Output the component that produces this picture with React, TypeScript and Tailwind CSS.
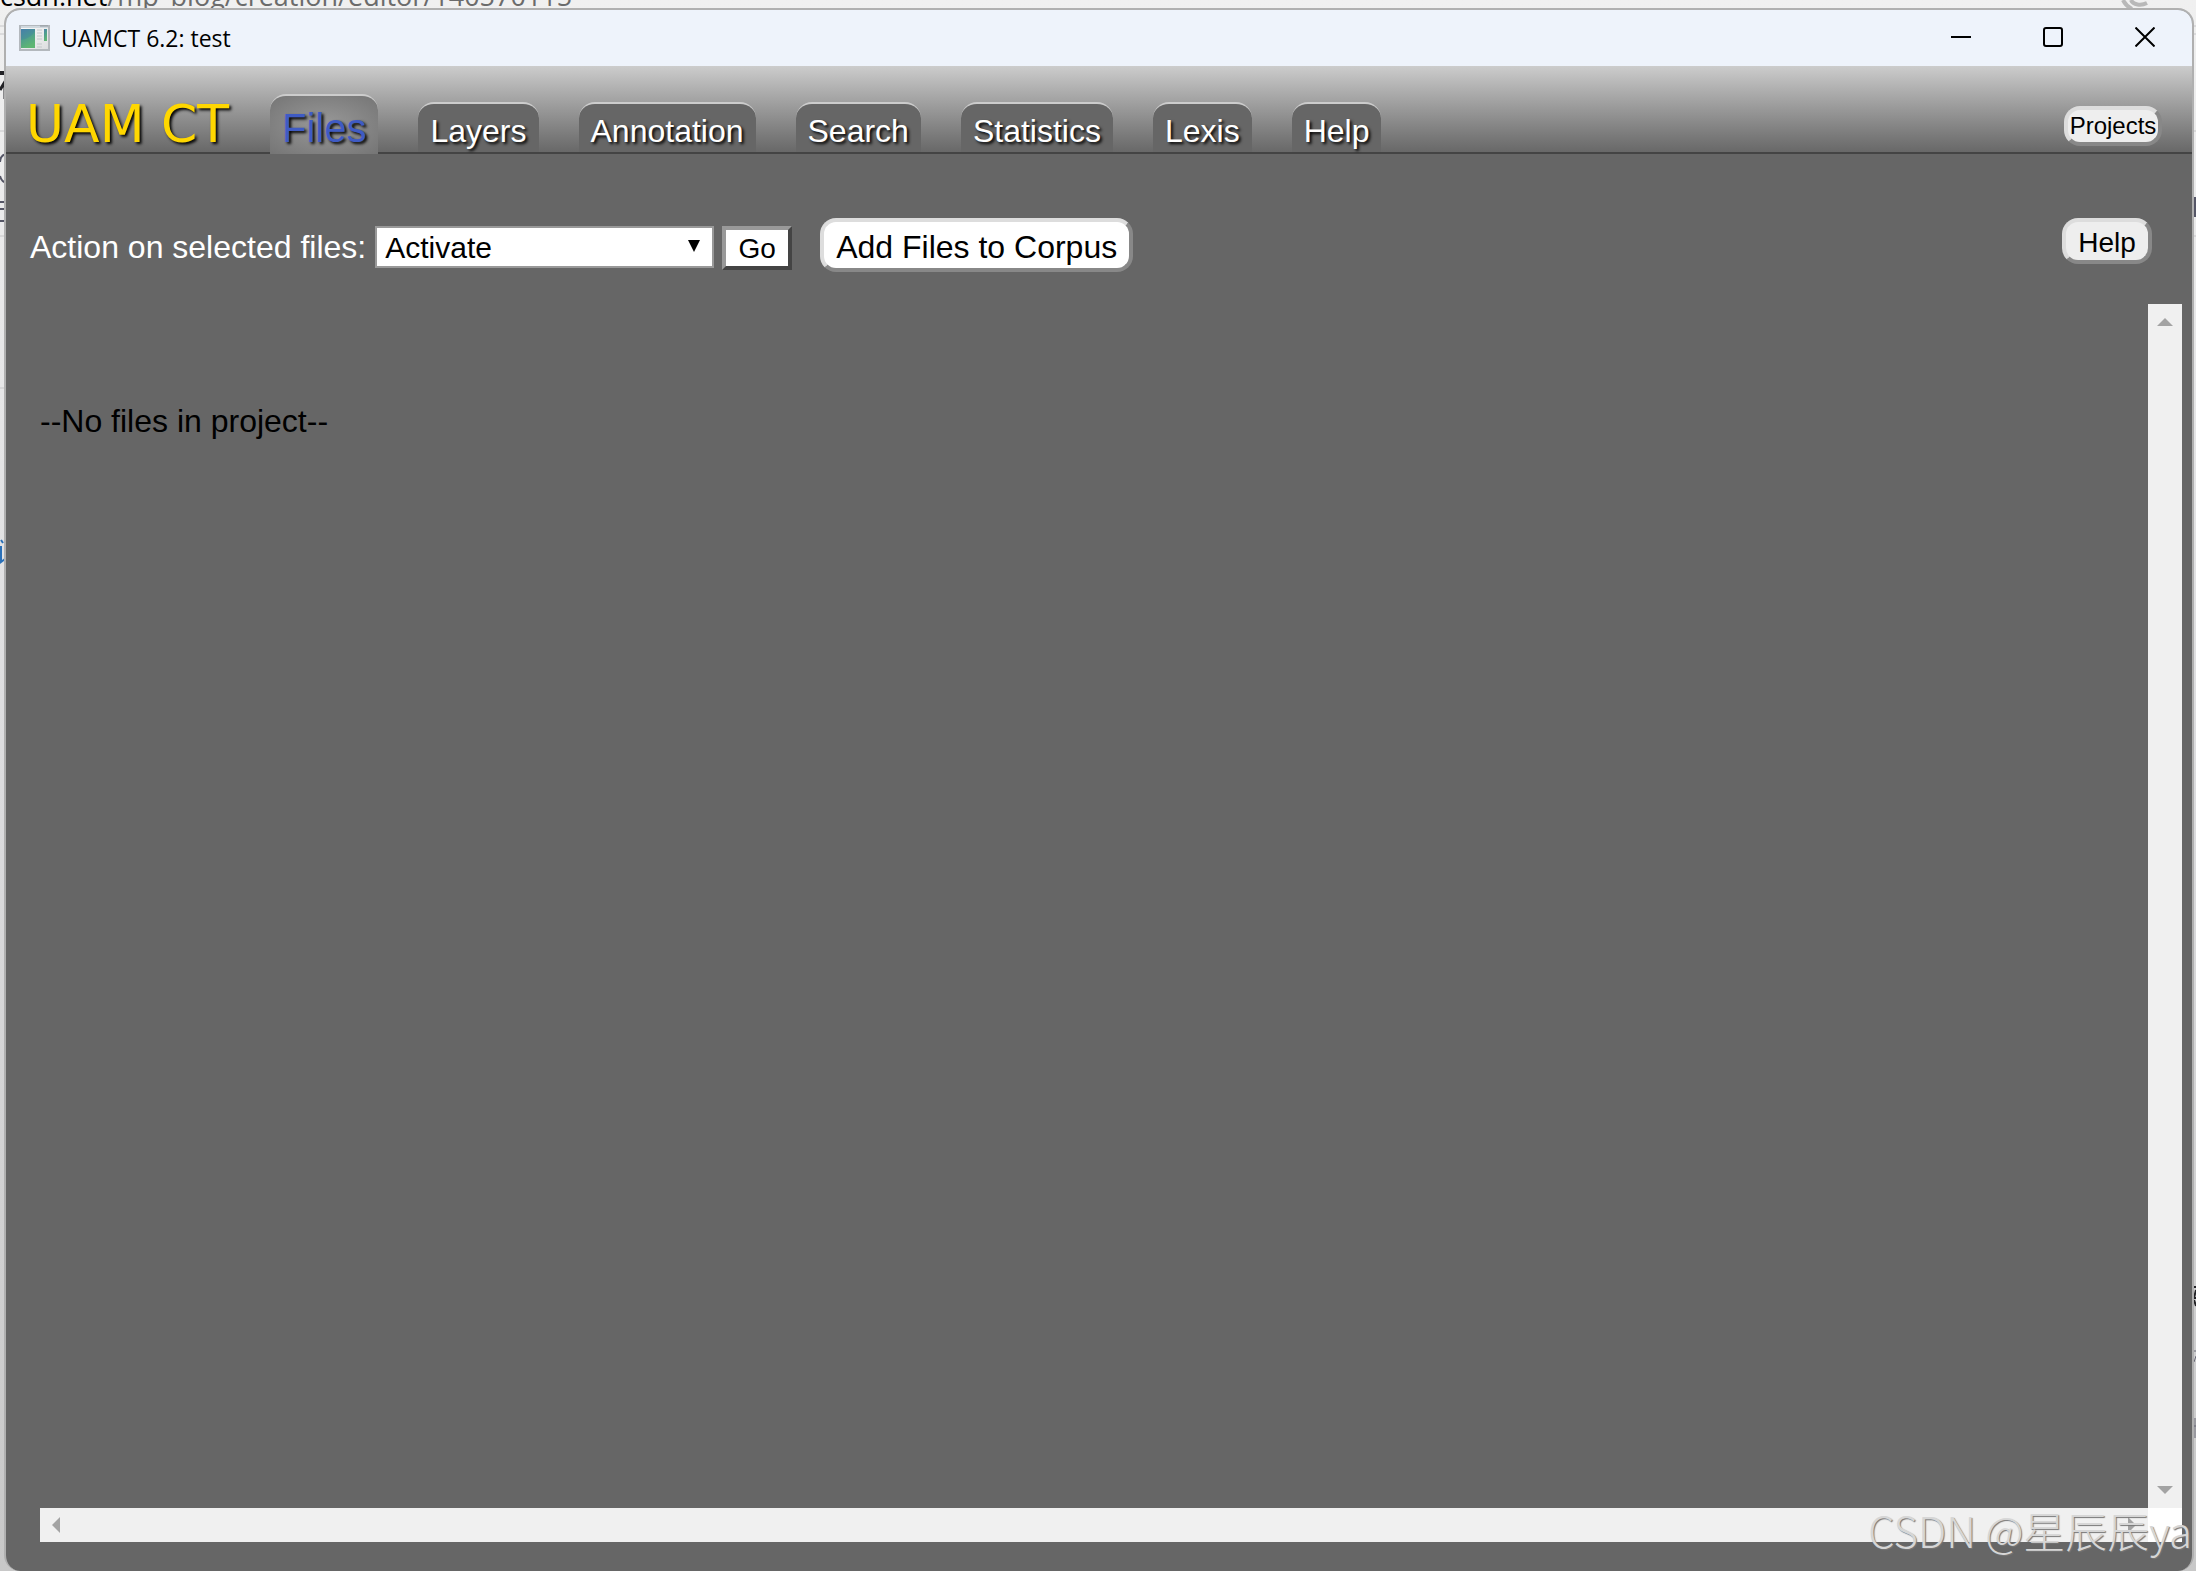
import { useState } from "react";

const tabs = ["Files", "Layers", "Annotation", "Search", "Statistics", "Lexis", "Help"];

const outset =
  "border-4 border-t-[#dddddd] border-l-[#dddddd] border-r-[#888888] border-b-[#888888] rounded-2xl text-black whitespace-nowrap";

const AppIcon = () => (
  <svg width="31" height="26" viewBox="0 0 31 26" aria-hidden="true">
    <defs>
      <linearGradient id="pane" x1="0" y1="0" x2="0.4" y2="1">
        <stop offset="0" stopColor="#4a80ac" />
        <stop offset="0.5" stopColor="#4f9f8c" />
        <stop offset="1" stopColor="#5fb673" />
      </linearGradient>
      <linearGradient id="frame" x1="0" y1="0" x2="1" y2="1">
        <stop offset="0" stopColor="#fbfbfb" />
        <stop offset="1" stopColor="#dcdddf" />
      </linearGradient>
    </defs>
    <rect x="1" y="1" width="29" height="24" fill="url(#frame)" stroke="#b3b8bd" strokeWidth="2" />
    <path d="M2 2h27" stroke="#d0d8de" strokeWidth="2" />
    <path d="M21 1h8" stroke="#8e969d" strokeWidth="1" />
    <rect x="2" y="4" width="14" height="19" fill="url(#pane)" />
    <path d="M2 15c6-1 11-4 14-9v-2H2z" fill="#3f7fa5" opacity="0.35" />
    <path d="M18 5h5M18 8h5M18 11h5M18 14h5M18 19h5M18 22h5" stroke="#c4c8cb" strokeWidth="1" />
    <rect x="25" y="4" width="3" height="12" fill="url(#pane)" />
  </svg>
);

const TitleBar = () => (
  <div className="h-14 shrink-0 bg-[#eef3fb] flex items-center justify-between pl-[13px] pr-[37px]">
    <div className="flex items-center gap-[11px]">
      <AppIcon />
      <span className="font-['Open_Sans','Noto_Sans',sans-serif] text-[23px] leading-8 text-black">
        UAMCT 6.2: test
      </span>
    </div>
    <div className="flex items-center gap-[72px] pb-0.5 text-black">
      <button aria-label="Minimize">
        <svg width="20" height="20" viewBox="0 0 20 20">
          <path d="M0 10h20" stroke="currentColor" strokeWidth="2" />
        </svg>
      </button>
      <button aria-label="Maximize">
        <svg width="20" height="20" viewBox="0 0 20 20">
          <rect x="1" y="1" width="18" height="18" rx="2" fill="none" stroke="currentColor" strokeWidth="2" />
        </svg>
      </button>
      <button aria-label="Close">
        <svg width="20" height="20" viewBox="0 0 20 20">
          <path d="M0.5 0.5l19 19M19.5 0.5l-19 19" stroke="currentColor" strokeWidth="2" />
        </svg>
      </button>
    </div>
  </div>
);

const Header = () => {
  const [active, setActive] = useState("Files");

  return (
    <div className="h-[88px] shrink-0 flex items-end justify-between bg-linear-to-b from-[#cccccc] to-[#666666] shadow-[inset_0_-2px_0_#444444] pl-5 pr-[30px]">
      <div className="flex items-end">
        <h1 className="w-[244px] font-['DejaVu_Sans',sans-serif] text-[52px] leading-[60px] text-[#ffd700] whitespace-nowrap [text-shadow:2px_2px_3px_#000]">
          UAM CT
        </h1>
        <nav className="flex items-end gap-10">
          {tabs.map((tab) => (
            <button
              key={tab}
              onClick={() => setActive(tab)}
              className={`px-3 rounded-t-2xl border-t-2 border-[#cccccc] [text-shadow:2px_2px_3px_#000] ${
                active === tab
                  ? "h-[60px] text-[40px] leading-[56px] pt-1 text-[#3f5bc4] bg-radial from-[#999999] to-[#757575]"
                  : "h-[50px] mb-0.5 text-[32px] leading-[46px] pt-1 text-white bg-[#666666]"
              }`}
            >
              {tab}
            </button>
          ))}
        </nav>
      </div>
      <button className={`${outset} mb-2 h-10 w-[98px] bg-[#eeeeee] text-2xl leading-8`}>Projects</button>
    </div>
  );
};

const Toolbar = () => (
  <div className="flex items-start justify-between pt-16 pl-6 pr-10">
    <div className="flex items-center">
      <label htmlFor="action" className="pt-1 text-[32px] leading-[50px] text-white whitespace-nowrap">
        Action on selected files:
      </label>
      <div className="relative ml-[9px] mt-1">
        <select
          id="action"
          className="appearance-none block w-[339px] h-[42px] pl-2 pt-0.5 bg-white text-black text-[30px] leading-9 border-2 border-[#999999] rounded-none"
        >
          <option>Activate</option>
        </select>
        <svg className="absolute right-[14px] top-[14px] pointer-events-none" width="12" height="12" viewBox="0 0 12 12">
          <path d="M0 0h12L6 12z" fill="#000" />
        </svg>
      </div>
      <button className="ml-2 mt-1.5 pt-0.5 w-[70px] h-11 bg-white text-black text-[28px] leading-[34px] border-4 border-t-[#999999] border-l-[#999999] border-r-[#444444] border-b-[#444444]">
        Go
      </button>
      <button className={`${outset} ml-7 pt-1 w-[313px] h-[54px] bg-white text-[32px] leading-[42px]`}>
        Add Files to Corpus
      </button>
    </div>
    <button className={`${outset} pt-1 w-[90px] h-[46px] bg-[#eeeeee] text-[28px] leading-[34px]`}>Help</button>
  </div>
);

const Arrow = ({ className }: { className: string }) => (
  <svg className={className} width="16" height="16" viewBox="0 0 16 16" aria-hidden="true">
    <path d="M0 12h16L8 4z" fill="#a3a3a3" />
  </svg>
);

const FileList = () => (
  <div className="flex-1 min-h-0 mt-8 ml-[34px] mr-[10px] mb-[29px] grid grid-cols-[1fr_34px] grid-rows-[1fr_34px]">
    <p className="pt-24 text-[32px] leading-[42px] text-black">--No files in project--</p>
    <div className="bg-[#f0f0f0] flex flex-col items-center justify-between py-[10px]">
      <Arrow className="" />
      <Arrow className="rotate-180" />
    </div>
    <div className="bg-[#f0f0f0] flex items-center justify-between px-2">
      <Arrow className="-rotate-90" />
      <Arrow className="rotate-90" />
    </div>
    <div className="bg-white" />
  </div>
);

// the browser page that shows round the edges of the window
const Backdrop = () => (
  <div className="absolute inset-0 bg-linear-to-b from-[#f0f0f0] via-[#dcdcde] to-[#c8c8c8]">
    <div className="h-2.5 flex items-end font-['Open_Sans',sans-serif] text-[27px] leading-[28px] text-[#6b6b6b]">
      <span className="text-black">csdn.net</span>/mp_blog/creation/editor/140570115
    </div>
    <svg className="absolute left-0 top-0" width="6" height="600" viewBox="0 0 6 600" fill="none" aria-hidden="true">
      <path d="M0 26h6M0 34h6M0 131h6M0 236h6M0 388h6" stroke="#c6c6c8" />
      <path d="M0 73h6" stroke="#222226" strokeWidth="4" />
      <path d="M0 90l6-10M5 82v17" stroke="#222226" strokeWidth="3" />
      <path d="M6 154c-4 1-6 4-6 8M0 176c1 4 3 6 6 7" stroke="#555666" strokeWidth="2" />
      <path d="M0 202h6M0 209h5v12H0" stroke="#555666" strokeWidth="2" />
      <path d="M1 540l2 3M1 546v16l4-3M5 546h1" stroke="#2a70b8" strokeWidth="2" />
    </svg>
    {/* reload icon of the address bar */}
    <svg className="absolute right-[46px] top-0" width="30" height="10" viewBox="0 0 30 10" fill="none" aria-hidden="true">
      <path d="M3 0c2 4 5 7 9 9M11 0c2 5 10 6 16 3" stroke="#b8b8b8" strokeWidth="4" />
    </svg>
    <svg className="absolute right-0 top-0" width="4" height="1440" viewBox="0 0 4 1440" fill="none" aria-hidden="true">
      <path d="M0 26h4M0 34h4M0 131h4M0 236h4" stroke="#c6c6c8" />
      <path d="M2 198h2M2 203h2M2 208h2M2 213h2M3 197v20" stroke="#555666" strokeWidth="2" />
      <path d="M1 1287h3M4 1290l-2 8M1 1298h3M2 1300l2 6" stroke="#222226" strokeWidth="2" />
      <path d="M1 1351h3M2 1362l2-6M1 1426h3M3 1418v20" stroke="#666773" strokeWidth="1" />
    </svg>
  </div>
);

export default function App() {
  return (
    <div className="relative h-screen overflow-hidden font-['Liberation_Sans',Arial,sans-serif]">
      <Backdrop />
      <div className="relative h-full pt-2 pl-1 pr-0.5">
        <div className="h-full flex flex-col overflow-hidden rounded-2xl border-2 border-b-0 border-[#b0b0b0] bg-[#666666]">
          <TitleBar />
          <Header />
          <Toolbar />
          <FileList />
        </div>
      </div>
      <div className="absolute right-1 bottom-3.5 font-['Noto_Sans_CJK_SC',sans-serif] font-light text-[42px] leading-[54px] text-[#d6d6d6] whitespace-nowrap pointer-events-none [text-shadow:1px_1px_1px_#777]">
        CSDN @星辰辰ya
      </div>
    </div>
  );
}
